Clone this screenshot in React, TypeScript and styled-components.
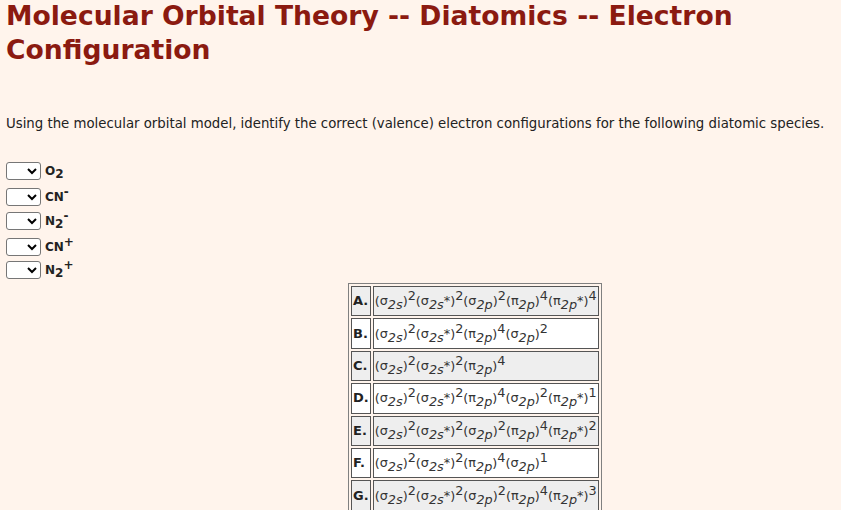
import React from 'react';
import styled, { createGlobalStyle } from 'styled-components';

const GlobalStyles = createGlobalStyle`
  html, body {
    margin: 0;
    height: 510px;
    overflow: hidden;
    background: #fff4ec;
  }
`;

const Page = styled.main`
  padding: 0 6px;
  font-family: "DejaVu Sans", Verdana, sans-serif;
  color: #222;
`;

const Title = styled.h1`
  margin: -1.5px 0 0;
  font-size: 26.6px;
  line-height: 34px;
  font-weight: bold;
  color: #8b1a10;
`;

const Intro = styled.p`
  margin: 49.5px 0 30px;
  font-size: 13.3px;
  line-height: 16px;
  white-space: nowrap;
`;

const Questions = styled.div`
  display: flex;
  flex-direction: column;
`;

const QuestionRow = styled.div<{ $height: number }>`
  display: flex;
  align-items: flex-start;
  gap: 4px;
  height: ${p => p.$height}px;
  font-size: 12px;
  font-weight: bold;
`;

const Picker = styled.select`
  width: 35px;
  height: 18px;
  padding: 0;
  background: #fff;
  border: 1px solid #767676;
  border-radius: 3px;
`;

const Species = styled.span`
  line-height: 18px;

  sub, sup {
    font-size: 12px;
    line-height: 0;
  }
`;

const ChoicesWrap = styled.div`
  display: flex;
  padding-left: 342px;
`;

const ChoicesTable = styled.table`
  border: 1px solid #808080;
  border-spacing: 2px;
  font-size: 12.8px;
`;

const LetterCell = styled.td<{ $shaded: boolean }>`
  padding: 0 1px;
  height: 28.4px;
  border: 1px solid #555;
  font-weight: bold;
  font-size: 13px;
  line-height: 16px;
  background: ${p => (p.$shaded ? '#eeeeee' : '#ffffff')};
`;

const FormulaCell = styled.td<{ $shaded: boolean }>`
  padding: 0 1px;
  width: 222px;
  height: 28.4px;
  border: 1px solid #555;
  white-space: nowrap;
  color: #333;
  line-height: 16px;
  background: ${p => (p.$shaded ? '#eeeeee' : '#ffffff')};

  sub {
    font-size: 12.8px;
    font-style: italic;
    line-height: 0;
  }
  sup {
    font-size: 12.8px;
    line-height: 0;
  }
`;

const Term = ({ orbital, sub, star, power }: { orbital: string; sub: string; star?: boolean; power: number }) => (
  <>
    ({orbital}
    <sub>{sub}</sub>
    {star ? '*' : null})<sup>{power}</sup>
  </>
);

type T = [string, string, boolean, number];

const base: T[] = [
  ['σ', '2s', false, 2],
  ['σ', '2s', true, 2],
];

const choices: { letter: string; terms: T[] }[] = [
  { letter: 'A.', terms: [...base, ['σ', '2p', false, 2], ['π', '2p', false, 4], ['π', '2p', true, 4]] },
  { letter: 'B.', terms: [...base, ['π', '2p', false, 4], ['σ', '2p', false, 2]] },
  { letter: 'C.', terms: [...base, ['π', '2p', false, 4]] },
  { letter: 'D.', terms: [...base, ['π', '2p', false, 4], ['σ', '2p', false, 2], ['π', '2p', true, 1]] },
  { letter: 'E.', terms: [...base, ['σ', '2p', false, 2], ['π', '2p', false, 4], ['π', '2p', true, 2]] },
  { letter: 'F.', terms: [...base, ['π', '2p', false, 4], ['σ', '2p', false, 1]] },
  { letter: 'G.', terms: [...base, ['σ', '2p', false, 2], ['π', '2p', false, 4], ['π', '2p', true, 3]] },
];

const species: { key: string; height: number; node: React.ReactNode }[] = [
  { key: 'o2', height: 26, node: <>O<sub>2</sub></> },
  { key: 'cn-', height: 24, node: <>CN<sup>-</sup></> },
  { key: 'n2-', height: 26, node: <>N<sub>2</sub><sup>-</sup></> },
  { key: 'cn+', height: 23, node: <>CN<sup>+</sup></> },
  { key: 'n2+', height: 22, node: <>N<sub>2</sub><sup>+</sup></> },
];

const App = () => (
  <>
    <GlobalStyles />
    <Page>
      <Title>Molecular Orbital Theory -- Diatomics -- Electron Configuration</Title>
      <Intro>
        Using the molecular orbital model, identify the correct (valence) electron configurations for the following diatomic species.
      </Intro>
      <Questions>
        {species.map(s => (
          <QuestionRow key={s.key} $height={s.height}>
            <Picker aria-label={s.key}>
              <option></option>
            </Picker>
            <Species>{s.node}</Species>
          </QuestionRow>
        ))}
      </Questions>
      <ChoicesWrap>
        <ChoicesTable>
          <tbody>
            {choices.map((c, i) => (
              <tr key={c.letter}>
                <LetterCell $shaded={i % 2 === 0}>{c.letter}</LetterCell>
                <FormulaCell $shaded={i % 2 === 0}>
                  {c.terms.map((t, j) => (
                    <Term key={j} orbital={t[0]} sub={t[1]} star={t[2]} power={t[3]} />
                  ))}
                </FormulaCell>
              </tr>
            ))}
          </tbody>
        </ChoicesTable>
      </ChoicesWrap>
    </Page>
  </>
);

export default App;
